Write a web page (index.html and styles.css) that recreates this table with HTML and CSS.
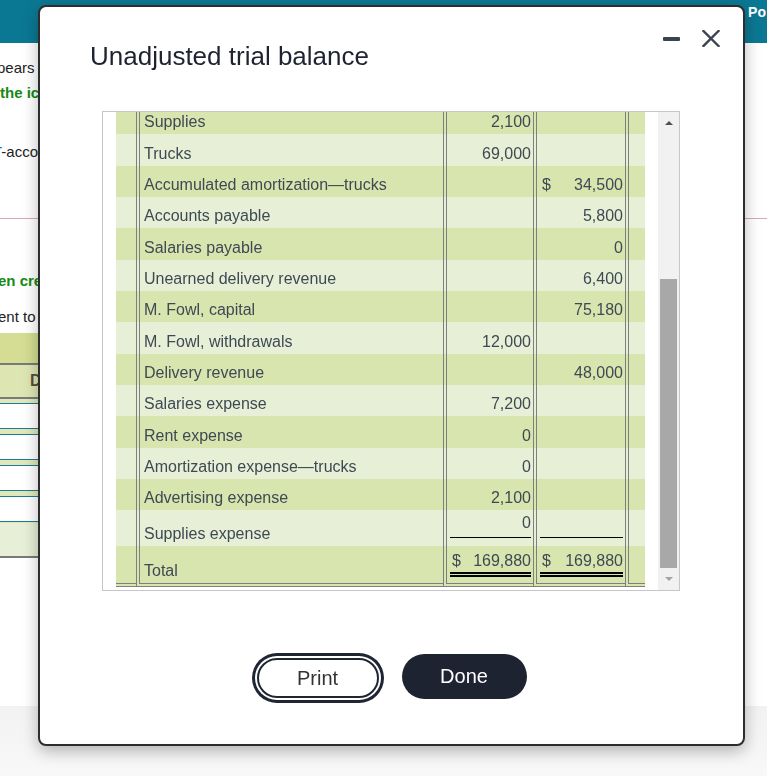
FILE: index.html
```html
<!DOCTYPE html>
<html lang="en">
<head>
<meta charset="utf-8">
<title>Unadjusted trial balance</title>
<link rel="stylesheet" href="styles.css">
</head>
<body>
<div class="page">
  <header class="topbar"><span class="topbar-points">Po</span></header>
  <main class="content">
    <div class="content-col">
      <p class="ln ln-1">pears</p>
      <p class="ln ln-2 ln-green">the ic</p>
      <p class="ln ln-3"><span class="ln-blue">T</span>-acco</p>
    </div>
    <hr class="rule">
    <div class="content-col">
      <p class="ln ln-4 ln-green">en cre</p>
      <p class="ln ln-5">ent to</p>
      <div class="bg-table">
        <div class="bg-band"></div>
        <div class="bg-head"><span class="bg-head-text">D</span></div>
        <div class="bg-row"><div class="bg-input"></div></div>
        <div class="bg-row"><div class="bg-input"></div></div>
        <div class="bg-row"><div class="bg-input"></div></div>
        <div class="bg-row"><div class="bg-input"></div></div>
        <div class="bg-foot"></div>
      </div>
    </div>
  </main>
  <footer class="footbar"></footer>
</div>

<div class="modal" role="dialog" aria-label="Unadjusted trial balance">
  <div class="modal-head">
    <h1 class="modal-title">Unadjusted trial balance</h1>
    <div class="modal-ctrls">
      <svg class="ctrl-min" width="18" height="17" viewBox="0 0 18 17" aria-label="Minimize"><rect x="1" y="7" width="17" height="4" rx="1" fill="#3b4350"/></svg>
      <svg class="ctrl-close" width="18" height="17" viewBox="0 0 18 17" aria-label="Close"><path d="M1.5 1 L16.5 16 M16.5 1 L1.5 16" stroke="#3b4350" stroke-width="2.4" stroke-linecap="square" fill="none"/></svg>
    </div>
  </div>

  <div class="tb-frame">
    <div class="tb-viewport">
      <table class="tb">
        <colgroup>
          <col class="col-pad"><col class="col-label"><col class="col-dr"><col class="col-cr"><col class="col-end">
        </colgroup>
        <tbody>
          <tr><td class="c-pad"></td><td class="c-label">Supplies</td><td class="c-num">2,100</td><td class="c-num"></td><td class="c-end"></td></tr>
          <tr><td class="c-pad"></td><td class="c-label">Trucks</td><td class="c-num">69,000</td><td class="c-num"></td><td class="c-end"></td></tr>
          <tr><td class="c-pad"></td><td class="c-label">Accumulated amortization—trucks</td><td class="c-num"></td><td class="c-num"><div class="amt"><span class="cur">$</span><span>34,500</span></div></td><td class="c-end"></td></tr>
          <tr><td class="c-pad"></td><td class="c-label">Accounts payable</td><td class="c-num"></td><td class="c-num">5,800</td><td class="c-end"></td></tr>
          <tr><td class="c-pad"></td><td class="c-label">Salaries payable</td><td class="c-num"></td><td class="c-num">0</td><td class="c-end"></td></tr>
          <tr><td class="c-pad"></td><td class="c-label">Unearned delivery revenue</td><td class="c-num"></td><td class="c-num">6,400</td><td class="c-end"></td></tr>
          <tr><td class="c-pad"></td><td class="c-label">M. Fowl, capital</td><td class="c-num"></td><td class="c-num">75,180</td><td class="c-end"></td></tr>
          <tr><td class="c-pad"></td><td class="c-label">M. Fowl, withdrawals</td><td class="c-num">12,000</td><td class="c-num"></td><td class="c-end"></td></tr>
          <tr><td class="c-pad"></td><td class="c-label">Delivery revenue</td><td class="c-num"></td><td class="c-num">48,000</td><td class="c-end"></td></tr>
          <tr><td class="c-pad"></td><td class="c-label">Salaries expense</td><td class="c-num">7,200</td><td class="c-num"></td><td class="c-end"></td></tr>
          <tr><td class="c-pad"></td><td class="c-label">Rent expense</td><td class="c-num">0</td><td class="c-num"></td><td class="c-end"></td></tr>
          <tr><td class="c-pad"></td><td class="c-label">Amortization expense—trucks</td><td class="c-num">0</td><td class="c-num"></td><td class="c-end"></td></tr>
          <tr><td class="c-pad"></td><td class="c-label">Advertising expense</td><td class="c-num">2,100</td><td class="c-num"></td><td class="c-end"></td></tr>
          <tr class="row-sub"><td class="c-pad"></td><td class="c-label">Supplies expense</td><td class="c-num c-sub"><div class="sub-line">0</div></td><td class="c-num c-sub"><div class="sub-line">&nbsp;</div></td><td class="c-end"></td></tr>
          <tr class="row-total"><td class="c-pad"></td><td class="c-label">Total</td><td class="c-num c-tot"><div class="amt tot-line"><span class="cur">$</span><span>169,880</span></div></td><td class="c-num c-tot"><div class="amt tot-line"><span class="cur">$</span><span>169,880</span></div></td><td class="c-end"></td></tr>
        </tbody>
      </table>
    </div>
    <div class="sb" aria-hidden="true">
      <div class="sb-btn sb-up"></div>
      <div class="sb-track"><div class="sb-thumb"></div></div>
      <div class="sb-btn sb-down"></div>
    </div>
  </div>

  <div class="modal-actions">
    <button class="btn btn-print" type="button">Print</button>
    <button class="btn btn-done" type="button">Done</button>
  </div>
</div>
</body>
</html>
```

FILE: styles.css
```css
* { box-sizing: border-box; }

html, body {
  margin: 0;
  padding: 0;
}

body {
  width: 767px;
  height: 776px;
  overflow: hidden;
  background: #fff;
  font-family: "Liberation Sans", Arial, sans-serif;
}

/* ---------- background page ---------- */
.page {
  display: flex;
  flex-direction: column;
  height: 776px;
}

.topbar {
  height: 43px;
  flex: none;
  background: #0b7893;
  display: flex;
  justify-content: flex-end;
  align-items: flex-start;
  padding: 4px 1px 0 0;
}

.topbar-points {
  color: #fff;
  font-weight: bold;
  font-size: 14px;
  line-height: 16px;
}

.content {
  flex: 1;
  padding-top: 16px;
}

.content-col {
  width: 700px;
}

.ln {
  margin: 0;
  height: 18px;
  line-height: 18px;
  font-size: 15px;
  color: #222;
  white-space: nowrap;
}

.ln-green {
  color: #168a16;
  font-weight: bold;
}

.ln-blue { color: #2a72b5; }

.ln-1 { margin-left: -3px; }
.ln-2 { margin-top: 7px; }
.ln-3 { margin-top: 41px; margin-left: -7px; }
.ln-4 { margin-top: 53px; margin-left: -2px; }
.ln-5 { margin-top: 18px; margin-left: -2px; }

.rule {
  margin: 57px 0 0;
  border: 0;
  height: 1px;
  background: #d8a9bb;
}

.bg-table {
  margin-top: 7px;
}

.bg-band {
  height: 32px;
  background: #d4dd93;
  border-bottom: 2px solid #7a7a7a;
}

.bg-head {
  height: 34px;
  background: #dde6b3;
  border-bottom: 2px solid #7a7a7a;
  padding: 7px 0 0 30px;
}

.bg-head-text {
  font-size: 16px;
  font-weight: bold;
  color: #5b4a36;
}

.bg-row {
  height: 31px;
  background: #dfe8b9;
  padding-top: 4px;
}

.bg-input {
  height: 26px;
  background: #fff;
  border-top: 1px solid #1d7a9a;
  border-bottom: 1px solid #1d7a9a;
}

.bg-foot {
  height: 35px;
  background: #e7efd6;
  border-bottom: 2px solid #7a7a7a;
}

.footbar {
  height: 70px;
  flex: none;
  background: linear-gradient(#f2f2f2, #f8f8f8);
}

/* ---------- modal ---------- */
.modal {
  position: fixed;
  left: 38px;
  top: 5px;
  width: 707px;
  height: 741px;
  background: #fff;
  border: 2px solid #2d2d2d;
  border-radius: 8px;
  box-shadow: 0 5px 16px rgba(0, 0, 0, 0.28);
  display: flex;
  flex-direction: column;
}

.modal-head {
  display: flex;
  justify-content: space-between;
  align-items: flex-start;
  padding: 23px 23px 0 50px;
}

.modal-title {
  margin: 11px 0 0;
  font-size: 26px;
  line-height: 30px;
  font-weight: normal;
  color: #1d2330;
}

.modal-ctrls {
  display: flex;
  gap: 22px;
  align-items: flex-start;
}

.ctrl-min,
.ctrl-close {
  display: block;
}

/* ---------- trial balance frame ---------- */
.tb-frame {
  margin: 40px 0 0 62px;
  width: 578px;
  height: 480px;
  border: 1px solid #c6c6c6;
  display: flex;
}

.tb-viewport {
  width: 555px;
  height: 100%;
  overflow: hidden;
  padding: 0 13px;
}

.tb {
  width: 529px;
  table-layout: fixed;
  border-collapse: separate;
  border-spacing: 0;
  margin-top: -9px;
  font-size: 16px;
  color: #3e4954;
}

.col-pad { width: 20px; }
.col-label { width: 307px; }
.col-dr { width: 90px; }
.col-cr { width: 92px; }
.col-end { width: 20px; }

.tb tr { height: 31.33px; }

.tb td {
  padding: 0 2px 3px 3px;
  vertical-align: bottom;
  line-height: 18px;
  white-space: nowrap;
}

.tb tr:nth-child(odd) td { background: #d9e5af; }
.tb tr:nth-child(even) td { background: #e7f0d7; }

.tb .c-label,
.tb .c-num,
.tb .c-end {
  border-left: 4px double #7f7f7f;
}

.tb .c-label { padding-left: 4px; }

.tb .c-num { text-align: right; }

.amt {
  display: flex;
  justify-content: space-between;
}

.cur { margin-left: 2px; }

.tb .row-sub { height: 36px; }

.tb .c-sub { padding-bottom: 8px; }

.sub-line {
  border-bottom: 1px solid #000;
  padding-bottom: 5px;
}

.tb .row-total { height: 41px; }

.tb .row-total td { border-bottom: 4px double #7f7f7f; }

.tb .c-tot { padding-bottom: 6px; }

.tot-line {
  border-bottom: 5px double #000;
  padding-bottom: 2px;
}

/* ---------- scrollbar ---------- */
.sb {
  width: 21px;
  flex: none;
  background: #f1f1f1;
  display: flex;
  flex-direction: column;
}

.sb-btn {
  height: 22px;
  flex: none;
  display: flex;
  align-items: center;
  justify-content: center;
}

.sb-up::before {
  content: "";
  border-left: 4px solid transparent;
  border-right: 4px solid transparent;
  border-bottom: 4px solid #505050;
}

.sb-down::before {
  content: "";
  border-left: 4px solid transparent;
  border-right: 4px solid transparent;
  border-top: 4px solid #a3a3a3;
}

.sb-track {
  flex: 1;
  display: flex;
  flex-direction: column;
  justify-content: flex-end;
  padding: 0 2px;
}

.sb-thumb {
  height: 289px;
  background: #a8a8a8;
}

/* ---------- actions ---------- */
.modal-actions {
  margin-top: 63px;
  display: flex;
  justify-content: center;
  align-items: flex-start;
  gap: 23px;
}

.btn {
  font-family: "Liberation Sans", Arial, sans-serif;
  font-size: 20px;
  border-radius: 999px;
  cursor: pointer;
}

.btn-print {
  margin-top: 4px;
  width: 122px;
  height: 40px;
  background: #fff;
  color: #333;
  border: 2px solid #1f2532;
  box-shadow: 0 0 0 2px #fff, 0 0 0 5px #1f2532;
}

.btn-done {
  width: 125px;
  height: 45px;
  background: #1d2330;
  color: #fff;
  border: 0;
}
```
